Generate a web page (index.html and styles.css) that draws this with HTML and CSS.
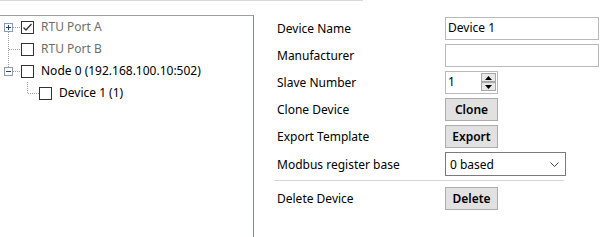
FILE: index.html
```html
<!DOCTYPE html>
<html>
<head>
<meta charset="utf-8">
<link rel="stylesheet" href="styles.css">
</head>
<body>
<div class="topline"></div>
<div class="main">
  <div class="tree">
    <div class="row">
      <svg class="gutter" width="21" height="22" viewBox="0 0 21 22">
        <line class="dot" x1="13" y1="11.5" x2="21" y2="11.5"/>
        <line class="dot" x1="8.5" y1="16" x2="8.5" y2="22"/>
        <rect class="exp" x="4.5" y="7.5" width="8" height="8"/>
        <line class="sign" x1="6" y1="11.5" x2="11" y2="11.5"/>
        <line class="sign" x1="8.5" y1="9" x2="8.5" y2="14"/>
      </svg>
      <span class="cb"><svg width="11" height="11" viewBox="0 0 11 11"><polyline points="1.5,5.5 4,8 9.5,2" fill="none" stroke="#333" stroke-width="1.3"/></svg></span>
      <span class="name dim">RTU Port A</span>
    </div>
    <div class="row">
      <svg class="gutter" width="21" height="22" viewBox="0 0 21 22">
        <line class="dot" x1="8.5" y1="0" x2="8.5" y2="22"/>
        <line class="dot" x1="9" y1="11.5" x2="21" y2="11.5"/>
      </svg>
      <span class="cb"></span>
      <span class="name dim">RTU Port B</span>
    </div>
    <div class="row">
      <svg class="gutter" width="21" height="22" viewBox="0 0 21 22">
        <line class="dot" x1="8.5" y1="0" x2="8.5" y2="7"/>
        <line class="dot" x1="13" y1="11.5" x2="21" y2="11.5"/>
        <rect class="exp" x="4.5" y="7.5" width="8" height="8"/>
        <line class="sign" x1="6" y1="11.5" x2="11" y2="11.5"/>
      </svg>
      <span class="cb"></span>
      <span class="name">Node 0 (192.168.100.10:502)</span>
    </div>
    <div class="row">
      <svg class="gutter" width="39" height="22" viewBox="0 0 39 22">
        <line class="dot" x1="27.5" y1="0" x2="27.5" y2="11"/>
        <line class="dot" x1="28" y1="11.5" x2="39" y2="11.5"/>
      </svg>
      <span class="cb"></span>
      <span class="name">Device 1 (1)</span>
    </div>
  </div>
  <div class="props">
    <div class="field"><span class="lbl">Device Name</span><div class="text wide">Device 1</div></div>
    <div class="field"><span class="lbl">Manufacturer</span><div class="text wide"></div></div>
    <div class="field"><span class="lbl">Slave Number</span>
      <div class="text spin"><span class="val">1</span>
        <div class="spinbtns">
          <span class="sb"><svg width="7" height="4" viewBox="0 0 7 4"><polygon points="0,4 7,4 3.5,0" fill="#000"/></svg></span>
          <span class="sb"><svg width="7" height="4" viewBox="0 0 7 4"><polygon points="0,0 7,0 3.5,4" fill="#000"/></svg></span>
        </div>
      </div>
    </div>
    <div class="field"><span class="lbl">Clone Device</span><button class="btn">Clone</button></div>
    <div class="field f5"><span class="lbl">Export Template</span><button class="btn">Export</button></div>
    <div class="field combo-row"><span class="lbl">Modbus register base</span>
      <div class="combo"><span>0 based</span><svg width="9" height="5" viewBox="0 0 9 5"><polyline points="0.5,0.5 4.5,4.5 8.5,0.5" fill="none" stroke="#444" stroke-width="1"/></svg></div>
    </div>
    <div class="sep"></div>
    <div class="field"><span class="lbl">Delete Device</span><button class="btn">Delete</button></div>
  </div>
</div>
</body>
</html>
```
FILE: styles.css
```css
html, body {
  margin: 0;
  padding: 0;
  background: #fff;
}
body {
  width: 609px;
  height: 237px;
  overflow: hidden;
  font-family: "Noto Sans", "Open Sans", sans-serif;
  font-size: 12px;
  color: #000;
}
.topline {
  width: 363px;
  height: 1px;
  background: #d9d9d9;
}
.main {
  display: flex;
  margin-top: 14px;
  height: 222px;
}
.tree {
  width: 254px;
  height: 222px;
  box-sizing: border-box;
  border-top: 1px solid #a0a0a0;
  border-right: 1px solid #828790;
  flex: none;
}
.row {
  display: flex;
  align-items: center;
  height: 22px;
}
.gutter {
  display: block;
  flex: none;
}
.dot {
  stroke: #a0a0a0;
  stroke-width: 1;
  stroke-dasharray: 1 1;
  shape-rendering: crispEdges;
}
.exp {
  fill: #fff;
  stroke: #8e9aae;
  stroke-width: 1;
  shape-rendering: crispEdges;
}
.sign {
  stroke: #23407a;
  stroke-width: 1;
  shape-rendering: crispEdges;
}
.cb {
  width: 13px;
  height: 13px;
  box-sizing: border-box;
  border: 1px solid #333;
  background: #fff;
  margin-right: 7px;
  display: flex;
  align-items: center;
  justify-content: center;
  flex: none;
}
.cb svg { display: block; }
.name {
  white-space: nowrap;
  line-height: 16px;
}
.dim { color: #6d6d6d; }

.props {
  padding: 2px 0 0 20px;
  flex: 1;
}
.field {
  display: flex;
  align-items: center;
  height: 23px;
  margin-bottom: 4px;
  padding-left: 3px;
}
.f5 { margin-top: 1px; }
.lbl {
  width: 168px;
  flex: none;
  white-space: nowrap;
}
.text {
  height: 23px;
  box-sizing: border-box;
  border: 1px solid #b9b9b9;
  background: #fff;
  padding: 0 0 0 2px;
  line-height: 19px;
}
.wide { width: 154px; }
.spin {
  width: 53px;
  display: flex;
  justify-content: space-between;
  padding-right: 1px;
}
.spinbtns {
  display: flex;
  flex-direction: column;
  padding-top: 1px;
}
.sb {
  width: 15px;
  height: 9px;
  box-sizing: border-box;
  border: 1px solid #a8a8a8;
  background: #e8e8e8;
  display: flex;
  align-items: center;
  justify-content: center;
}
.btn {
  width: 53px;
  height: 23px;
  box-sizing: border-box;
  border: 1px solid #adadad;
  background: #e1e1e1;
  font-family: inherit;
  font-size: 12px;
  font-weight: 600;
  color: #000;
  padding: 0;
}
.combo-row { height: 24px; }
.combo {
  width: 121px;
  height: 24px;
  box-sizing: border-box;
  border: 1px solid #7a7a7a;
  display: flex;
  align-items: center;
  justify-content: space-between;
  padding: 0 6px 0 4px;
}
.sep {
  width: 290px;
  height: 1px;
  background: #d4d4d4;
  margin: 2px 0 6px 0;
}
```
